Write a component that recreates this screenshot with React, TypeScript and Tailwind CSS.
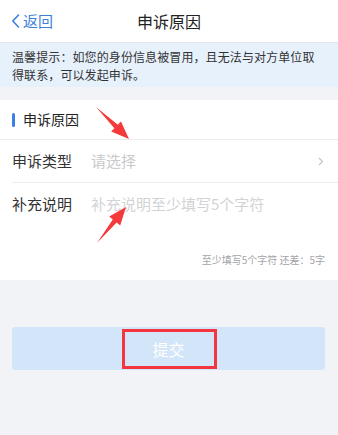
import React from "react";

const font = { fontFamily: '"Noto Sans CJK SC", "Noto Sans", sans-serif' };

export default function App() {
  return (
    <div className="relative w-[338px] h-[435px] overflow-hidden bg-[#f2f3f7]" style={font}>
      {/* Header */}
      <div className="relative h-[43px] bg-white border-b border-[#e3e4e8] flex items-center justify-center">
        <div className="absolute left-[11px] top-0 h-full flex items-center text-[#3b7fdc] text-[15px]">
          <svg width="9" height="14" viewBox="0 0 9 14" className="mr-[3px]">
            <path d="M7.5 1 L1.8 7 L7.5 13" fill="none" stroke="#3b7fdc" strokeWidth="1.6" strokeLinecap="round" strokeLinejoin="round" />
          </svg>
          <span>返回</span>
        </div>
        <div className="text-[16px] text-[#222]">申诉原因</div>
      </div>

      {/* Notice */}
      <div className="bg-[#e7f1fc] px-[12px] pt-[5px] pb-[6px] text-[12px] leading-[18px] text-[#333] tracking-[0.1px] h-[44px]">
        温馨提示：如您的身份信息被冒用，且无法与对方单位取得联系，可以发起申诉。
      </div>

      {/* Form section */}
      <div className="mt-[13px] bg-white">
        <div className="h-[40px] flex items-center pl-[12px] border-b border-[#ececef]">
          <div className="w-[3px] h-[14px] rounded-full bg-[#3b7fe8]" />
          <div className="ml-[8px] text-[14px] text-[#222]">申诉原因</div>
        </div>
        <div className="ml-[12px] h-[43px] flex items-center border-b border-[#ececef] pr-[12px]">
          <div className="w-[79px] text-[15px] text-[#333]">申诉类型</div>
          <div className="flex-1 text-[15px] text-[#c8c9cc]">请选择</div>
          <svg width="6" height="9" viewBox="0 0 6 9" className="mr-[2px]">
            <path d="M1 1 L4.5 4.5 L1 8" fill="none" stroke="#c5c6ca" strokeWidth="1.2" />
          </svg>
        </div>
        <div className="ml-[12px] pr-[13px] h-[97px] flex flex-col">
          <div className="flex items-center h-[42px]">
            <div className="w-[79px] text-[15px] text-[#333]">补充说明</div>
            <div className="flex-1 text-[15px] text-[#d2d3d6]">补充说明至少填写5个字符</div>
          </div>
          <div className="mt-auto mb-[13px] text-right text-[10px] text-[#a3a4a8] leading-[14px]">
            至少填写5个字符 还差：5字
          </div>
        </div>
      </div>

      {/* Button */}
      <div className="px-[12px] pr-[13px] mt-[47px]">
        <div className="relative h-[43px] rounded-[3px] bg-[#d3e5f9] flex items-center justify-center">
          <span className="text-[16px] text-white">提交</span>
          <div className="absolute left-[110px] top-[2px] w-[95px] h-[40px] border-[3px] border-[#f5363e]" />
        </div>
      </div>

      {/* Annotation arrows */}
      <svg className="absolute left-0 top-0 pointer-events-none" width="338" height="435" viewBox="0 0 338 435">
        <polygon
          points="96,107 117.8,124.7 121,121.5 129,139 111.2,131.5 114.4,128.3"
          fill="#f43a3a"
        />
        <polygon
          points="97,243 112.8,219.4 109.2,216.6 126,207 120.2,225.4 116.6,222.6"
          fill="#f43a3a"
        />
      </svg>
    </div>
  );
}
